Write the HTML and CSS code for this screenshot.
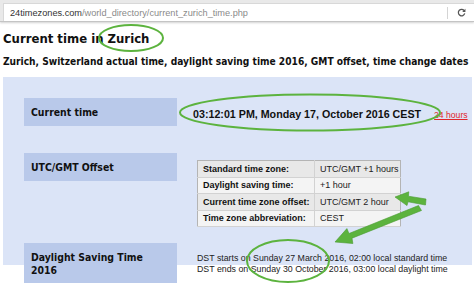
FILE: index.html
```html
<!DOCTYPE html>
<html>
<head>
<meta charset="utf-8">
<link rel="stylesheet" href="styles.css">
</head>
<body>
<div class="page">
  <div class="browser">
    <div class="urlbar">
      <span class="url"><span class="host">24timezones.com</span>/world_directory/current_zurich_time.php</span>
      <span class="sep"></span>
      <span class="reload">
        <svg width="9" height="9" viewBox="0 0 10 10"><path d="M8.2 3.2A3.6 3.6 0 1 0 8.6 6" fill="none" stroke="#555" stroke-width="1.4"/><path d="M9.4 0.8 9.4 4.4 5.8 4.4Z" fill="#555"/></svg>
      </span>
    </div>
  </div>

  <h1 class="title">Current time in Zurich</h1>
  <p class="subtitle">Zurich, Switzerland actual time, daylight saving time 2016, GMT offset, time change dates</p>

  <div class="panel">
    <div class="row row-time">
      <div class="label">Current time</div>
      <div class="content time-content"><span class="time">03:12:01 PM, Monday 17, October 2016 CEST</span><a class="hours" href="#">24 hours</a></div>
    </div>

    <div class="row row-offset">
      <div class="label">UTC/GMT Offset</div>
      <div class="content">
        <table class="offsets">
          <tr class="odd"><th>Standard time zone:</th><td>UTC/GMT +1 hours</td></tr>
          <tr class="even"><th>Daylight saving time:</th><td>+1 hour</td></tr>
          <tr class="odd"><th>Current time zone offset:</th><td>UTC/GMT 2 hour</td></tr>
          <tr class="even"><th>Time zone abbreviation:</th><td>CEST</td></tr>
        </table>
      </div>
    </div>

    <div class="row row-dst">
      <div class="label label-tall">Daylight Saving Time<br>2016</div>
      <div class="content dst">
        <div>DST starts on Sunday 27 March 2016, 02:00 local standard time</div>
        <div>DST ends on Sunday 30 October 2016, 03:00 local daylight time</div>
      </div>
    </div>
  </div>

  <svg class="marks" width="474" height="289" viewBox="0 0 474 289">
    <g fill="none" stroke="#5cb33e" stroke-width="2">
      <ellipse cx="131" cy="38" rx="32" ry="13"/>
      <ellipse cx="310" cy="112.5" rx="130" ry="18"/>
      <ellipse cx="288" cy="261" rx="41" ry="21"/>
    </g>
    <g fill="#5cb33e" stroke="#4a9a30" stroke-width="0.6">
      <path d="M426 199 L425.5 205 L408 201.8 L407 205.6 L395 197 L408.8 191.8 L408.4 196.2 Z"/>
      <path d="M418.5 205.5 L421.5 210.5 L352 238.2 L352.9 243.5 L335 242 L346.9 228.6 L349 233.5 Z"/>
    </g>
  </svg>
</div>
</body>
</html>
```
FILE: styles.css
```css
html, body {
  margin: 0;
  padding: 0;
  background: #ffffff;
}

.page {
  position: relative;
  width: 474px;
  height: 289px;
  overflow: hidden;
  font-family: "DejaVu Sans Condensed", "DejaVu Sans", sans-serif;
  color: #111;
}

.browser {
  background: #e9e9e9;
  padding-top: 3px;
  height: 18px;
  border-bottom: 1px solid #c4c4c4;
  box-shadow: 0 1px 2px rgba(0,0,0,0.18);
}

.urlbar {
  height: 17px;
  margin-left: 3px;
  background: #ffffff;
  border-top: 1px solid #d8d8d8;
  border-left: 1px solid #d8d8d8;
  display: flex;
  align-items: center;
  font-family: "Liberation Sans", Arial, sans-serif;
  font-size: 9.2px;
  color: #8a8a8a;
}

.url {
  padding-left: 6px;
  flex: 1;
  white-space: nowrap;
}

.host {
  color: #333;
}

.sep {
  width: 1px;
  height: 12px;
  background: #d4d4d4;
}

.reload {
  width: 26px;
  display: flex;
  justify-content: center;
  align-items: center;
}

.title {
  margin: 0;
  padding: 9px 0 0 3px;
  font-size: 13px;
  line-height: 16px;
  font-weight: bold;
}

.subtitle {
  margin: 0;
  padding: 9px 0 0 3px;
  font-size: 10.15px;
  line-height: 12px;
  font-weight: bold;
  white-space: nowrap;
}

.panel {
  margin: 9px 2px 0 3px;
  background: #dbe4f7;
  padding: 21px 0 5px 21px;
  display: flex;
  flex-direction: column;
  height: 188px;
  box-sizing: border-box;
}

.row {
  display: flex;
  align-items: center;
}

.row-offset {
  margin-top: 27px;
  align-items: flex-start;
}

.row-dst {
  margin-top: 16px;
}

.label {
  flex: 0 0 153px;
  box-sizing: border-box;
  height: 28px;
  padding-left: 7px;
  background: #b9c9ea;
  font-size: 10.4px;
  font-weight: bold;
  display: flex;
  align-items: center;
}

.label-tall {
  height: 40px;
  line-height: 13.5px;
  padding-top: 2px;
}

.content {
  flex: 1 1 auto;
  min-width: 0;
}

.time-content {
  padding-left: 16px;
  white-space: nowrap;
}

.time {
  font-family: "Liberation Sans", Arial, sans-serif;
  font-weight: bold;
  font-size: 10.7px;
}

.hours {
  margin-left: 13px;
  font-family: "Liberation Sans", Arial, sans-serif;
  font-size: 8.6px;
  color: #e0262b;
}

.offsets {
  margin: 7px 0 0 20px;
  border-collapse: collapse;
  border: 1px solid #b4b4b4;
  font-family: "Liberation Sans", Arial, sans-serif;
  font-size: 9px;
  width: 204px;
}

.offsets th,
.offsets td {
  height: 15.5px;
  padding: 0 0 0 5px;
  text-align: left;
  white-space: nowrap;
  border-bottom: 1px solid #d2d2d2;
}

.offsets th {
  width: 111px;
  font-weight: bold;
  border-right: 1px solid #d2d2d2;
}

.offsets td {
  color: #222;
}

.offsets .odd {
  background: #e8e8e8;
}

.offsets .even {
  background: #f4f4f4;
}

.dst {
  padding-left: 20px;
  padding-top: 1px;
  font-family: "Liberation Sans", Arial, sans-serif;
  font-size: 8.8px;
  line-height: 10.5px;
  color: #222;
  white-space: nowrap;
}

.marks {
  position: absolute;
  left: 0;
  top: 0;
  pointer-events: none;
}
```
